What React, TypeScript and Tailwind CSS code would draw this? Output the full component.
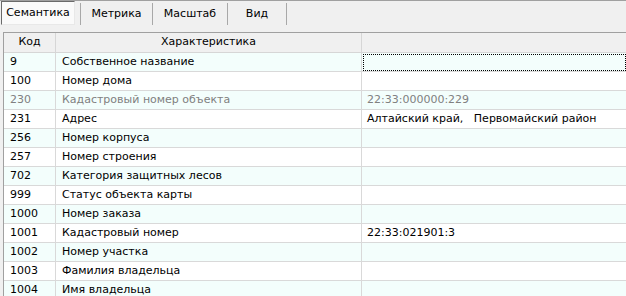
const tabs = ['Семантика', 'Метрика', 'Масштаб', 'Вид'];

type Row = { code: string; name: string; value?: string; dim?: boolean; focus?: boolean };

const rows: Row[] = [
  { code: '9', name: 'Собственное название', focus: true },
  { code: '100', name: 'Номер дома' },
  { code: '230', name: 'Кадастровый номер объекта', value: '22:33:000000:229', dim: true },
  { code: '231', name: 'Адрес', value: 'Алтайский край,   Первомайский район' },
  { code: '256', name: 'Номер корпуса' },
  { code: '257', name: 'Номер строения' },
  { code: '702', name: 'Категория защитных лесов' },
  { code: '999', name: 'Статус объекта карты' },
  { code: '1000', name: 'Номер заказа' },
  { code: '1001', name: 'Кадастровый номер', value: '22:33:021901:3' },
  { code: '1002', name: 'Номер участка' },
  { code: '1003', name: 'Фамилия владельца' },
  { code: '1004', name: 'Имя владельца' },
];

export default function App() {
  return (
    <div
      className="w-[626px] h-[296px] overflow-hidden bg-[#f0f0f0] border-t border-[#a0a0a0] text-[11px] text-black"
      style={{ fontFamily: '"DejaVu Sans", Tahoma, sans-serif' }}
    >
      {/* tabs */}
      <div className="flex h-[24px] items-stretch">
        <div className="ml-[1px] w-[74px] flex items-center justify-center border border-t-[#6a6a6a] border-l-[#6a6a6a] border-r-[#e8e8e8] border-b-[#e8e8e8] bg-[#fafafa] mr-[5px] pt-[1px]">
          {tabs[0]}
        </div>
        <div className="w-[72px] flex items-center justify-center border-l border-[#a8a8a8] mt-[2px]">{tabs[1]}</div>
        <div className="w-[75px] flex items-center justify-center border-l border-[#a8a8a8] mt-[2px]">{tabs[2]}</div>
        <div className="w-[59px] flex items-center justify-center border-l border-[#a8a8a8] mt-[2px]">{tabs[3]}</div>
        <div className="border-l border-[#a8a8a8] mt-[2px]" />
      </div>

      {/* grid */}
      <div className="mt-[7px] ml-[3px] border-t border-l border-[#a0a0a0]">
        <div className="flex h-[20px] bg-[#f0f0f0] border-b border-[#d6d6d6]">
          <div className="w-[52px] flex items-center justify-center border-r border-[#d6d6d6]">Код</div>
          <div className="w-[306px] flex items-center justify-center border-r border-[#d6d6d6]">
            Характеристика
          </div>
          <div className="flex-1" />
        </div>
        {rows.map((r, i) => (
          <div
            key={r.code}
            className={`flex h-[19px] border-b border-[#d9d9d9] ${i % 2 === 0 ? 'bg-[#f3fefc]' : 'bg-white'} ${
              r.dim ? 'text-[#808080]' : ''
            }`}
          >
            <div className="w-[52px] flex items-center pl-[6px] border-r border-[#d9d9d9]">{r.code}</div>
            <div className="w-[306px] flex items-center pl-[6px] border-r border-[#d9d9d9]">{r.name}</div>
            <div className="flex-1 flex items-center">
              {r.focus ? (
                <div className="ml-[1px] h-[17px] w-full border border-dotted border-black" />
              ) : (
                <span className="pl-[5px] whitespace-pre">{r.value}</span>
              )}
            </div>
          </div>
        ))}
      </div>
    </div>
  );
}
